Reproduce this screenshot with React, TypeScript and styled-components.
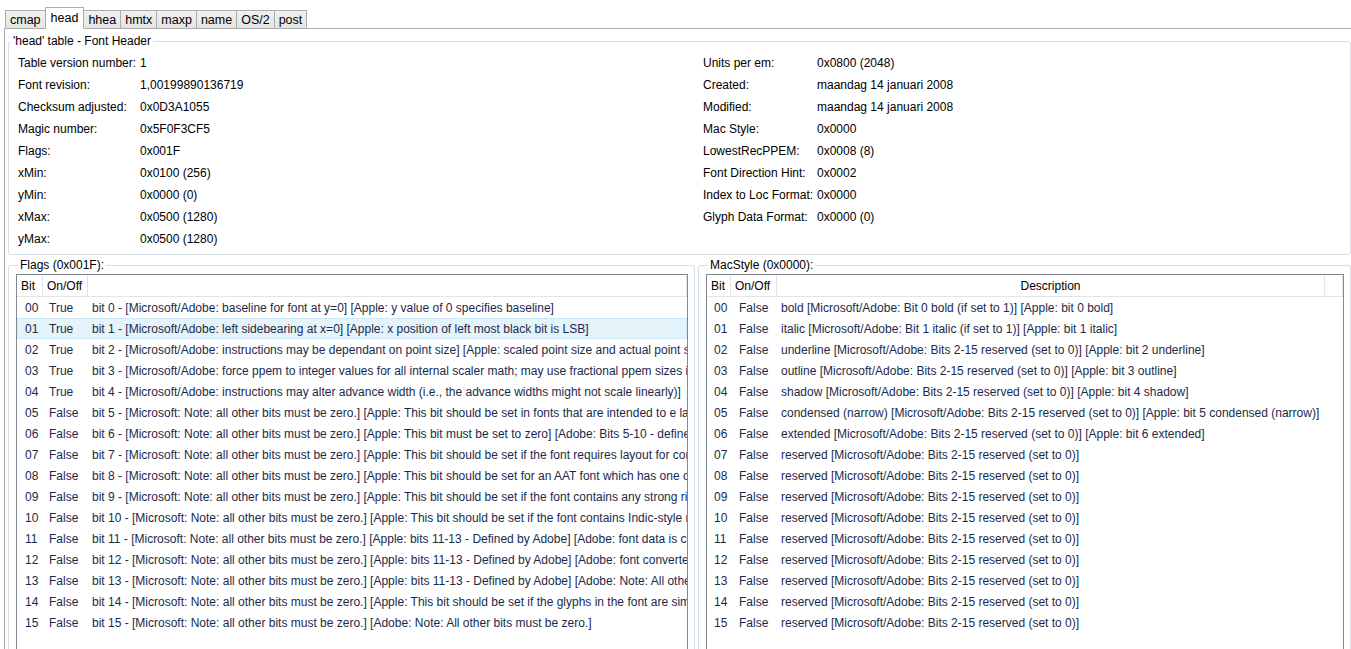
import styled, { createGlobalStyle } from 'styled-components';

const Global = createGlobalStyle`
  html, body { margin: 0; background: #fff; overflow: hidden; }
  body { font-family: "Liberation Sans", "Noto Sans", sans-serif; font-size: 12px; color: #000; }
`;

const Page = styled.div`
  width: 1351px;
  height: 649px;
  padding: 6px 0 0 4px;
  box-sizing: border-box;
  display: flex;
  flex-direction: column;
`;

const TabRow = styled.div`
  display: flex;
  align-items: flex-end;
  height: 22px;
  padding-left: 2px;
`;

const Tab = styled.div<{ $active?: boolean }>`
  height: ${p => (p.$active ? '22px' : '19px')};
  padding: 0 ${p => (p.$active ? 5 : 4)}px;
  display: flex;
  align-items: center;
  border: 1px solid #acacac;
  border-bottom: ${p => (p.$active ? '1px solid #fff' : '1px solid #acacac')};
  margin-left: -1px;
  background: ${p => (p.$active ? '#fff' : 'linear-gradient(#f0f0f0, #e5e5e5)')};
  position: relative;
  z-index: ${p => (p.$active ? 1 : 0)};
  margin-bottom: -1px;
  box-sizing: border-box;
  font-size: 12.5px;
`;

const Panel = styled.div`
  flex: 1;
  border-top: 1px solid #acacac;
  border-left: 1px solid #acacac;
  padding: 5px 0 0 3px;
  display: flex;
  flex-direction: column;
  gap: 3px;
  min-height: 0;
`;

const Group = styled.fieldset`
  margin: 0;
  border: 1px solid #d5dfe5;
  border-radius: 3px;
  padding: 4px 0 0 0;
  min-width: 0;
  box-sizing: border-box;
`;

const Legend = styled.legend`
  padding: 0 2px;
  margin-left: 2px;
  font-size: 12px;
`;

const HeaderGrid = styled.div`
  display: grid;
  grid-template-columns: 685px 1fr;
  padding: 0 0 4px 9px;
`;

const FieldCol = styled.div`
  display: flex;
  flex-direction: column;
`;

const Field = styled.div<{ $lw: number }>`
  display: flex;
  height: 22px;
  align-items: center;
  white-space: nowrap;
  & > span:first-child { width: ${p => p.$lw}px; flex: none; }
`;

const Bottom = styled.div`
  flex: 1;
  display: grid;
  grid-template-columns: 687px 1fr;
  gap: 3px;
  min-height: 0;
`;

const ListGroup = styled(Group)`
  border-bottom: none;
  border-radius: 3px 3px 0 0;
  padding: 0 6px 0 7px;
  display: flex;
  flex-direction: column;
  overflow: hidden;
`;

const List = styled.div`
  flex: 1;
  border: 1px solid #828790;
  border-bottom: none;
  margin-top: 2px;
  overflow: hidden;
  color: #1b2a4a;
`;

const HeadRow = styled.div`
  display: flex;
  height: 21px;
  border-bottom: 1px solid #e5e5e5;
  color: #000;
`;

const HeadCell = styled.div<{ $w?: number; $center?: boolean; $grow?: boolean }>`
  width: ${p => (p.$w ? `${p.$w}px` : 'auto')};
  flex: ${p => (p.$grow ? 1 : 'none')};
  border-right: 1px solid #e5e5e5;
  display: flex;
  align-items: center;
  justify-content: ${p => (p.$center ? 'center' : 'flex-start')};
  padding-left: ${p => (p.$center ? 0 : 4)}px;
  box-sizing: border-box;
`;

const Row = styled.div<{ $sel?: boolean }>`
  display: flex;
  height: 21px;
  align-items: center;
  white-space: nowrap;
  background: ${p => (p.$sel ? '#e5f3fb' : 'transparent')};
  box-shadow: ${p => (p.$sel ? 'inset 0 0 0 1px #cde8f9' : 'none')};
`;

const Cell = styled.div<{ $w: number; $pl: number }>`
  width: ${p => p.$w}px;
  flex: none;
  padding-left: ${p => p.$pl}px;
  box-sizing: border-box;
`;

const DescCell = styled.div`
  flex: 1;
  padding-left: 4px;
  overflow: hidden;
`;

const leftFields = [
  ['Table version number:', '1'],
  ['Font revision:', '1,00199890136719'],
  ['Checksum adjusted:', '0x0D3A1055'],
  ['Magic number:', '0x5F0F3CF5'],
  ['Flags:', '0x001F'],
  ['xMin:', '0x0100 (256)'],
  ['yMin:', '0x0000 (0)'],
  ['xMax:', '0x0500 (1280)'],
  ['yMax:', '0x0500 (1280)'],
];

const rightFields = [
  ['Units per em:', '0x0800 (2048)'],
  ['Created:', 'maandag 14 januari 2008'],
  ['Modified:', 'maandag 14 januari 2008'],
  ['Mac Style:', '0x0000'],
  ['LowestRecPPEM:', '0x0008 (8)'],
  ['Font Direction Hint:', '0x0002'],
  ['Index to Loc Format:', '0x0000'],
  ['Glyph Data Format:', '0x0000 (0)'],
];

const note = '[Microsoft: Note: all other bits must be zero.]';
const flags = [
  'bit 0 - [Microsoft/Adobe: baseline for font at y=0] [Apple: y value of 0 specifies baseline]',
  'bit 1 - [Microsoft/Adobe: left sidebearing at x=0] [Apple: x position of left most black bit is LSB]',
  'bit 2 - [Microsoft/Adobe: instructions may be dependant on point size] [Apple: scaled point size and actual point size will differ]',
  'bit 3 - [Microsoft/Adobe: force ppem to integer values for all internal scaler math; may use fractional ppem sizes if this bit is clear]',
  'bit 4 - [Microsoft/Adobe: instructions may alter advance width (i.e., the advance widths might not scale linearly)]',
  `bit 5 - ${note} [Apple: This bit should be set in fonts that are intended to e laid out vertically]`,
  `bit 6 - ${note} [Apple: This bit must be set to zero] [Adobe: Bits 5-10 - defined by Apple]`,
  `bit 7 - ${note} [Apple: This bit should be set if the font requires layout for correct linguistic rendering]`,
  `bit 8 - ${note} [Apple: This bit should be set for an AAT font which has one or more metamorphosis effects]`,
  `bit 9 - ${note} [Apple: This bit should be set if the font contains any strong right-to-left glyphs]`,
  `bit 10 - ${note} [Apple: This bit should be set if the font contains Indic-style rearrangement effects]`,
  `bit 11 - ${note} [Apple: bits 11-13 - Defined by Adobe] [Adobe: font data is compressed]`,
  `bit 12 - ${note} [Apple: bits 11-13 - Defined by Adobe] [Adobe: font converted]`,
  `bit 13 - ${note} [Apple: bits 11-13 - Defined by Adobe] [Adobe: Note: All other bits must be zero.]`,
  `bit 14 - ${note} [Apple: This bit should be set if the glyphs in the font are simply generic symbols]`,
  `bit 15 - ${note} [Adobe: Note: All other bits must be zero.]`,
];

const rsv = 'reserved [Microsoft/Adobe: Bits 2-15  reserved (set to 0)]';
const mac = [
  'bold [Microsoft/Adobe: Bit 0 bold (if set to 1)] [Apple: bit 0 bold]',
  'italic [Microsoft/Adobe: Bit 1 italic (if set to 1)] [Apple: bit 1 italic]',
  'underline [Microsoft/Adobe: Bits 2-15  reserved (set to 0)] [Apple: bit 2 underline]',
  'outline [Microsoft/Adobe: Bits 2-15  reserved (set to 0)] [Apple: bit 3 outline]',
  'shadow [Microsoft/Adobe: Bits 2-15  reserved (set to 0)] [Apple: bit 4 shadow]',
  'condensed (narrow) [Microsoft/Adobe: Bits 2-15  reserved (set to 0)] [Apple: bit 5 condensed (narrow)]',
  'extended [Microsoft/Adobe: Bits 2-15  reserved (set to 0)] [Apple: bit 6 extended]',
  ...Array(9).fill(rsv),
];

const pad = (i: number) => String(i).padStart(2, '0');
const tabs = ['cmap', 'head', 'hhea', 'hmtx', 'maxp', 'name', 'OS/2', 'post'];

export default function App() {
  return (
    <Page>
      <Global />
      <TabRow>
        {tabs.map(t => (
          <Tab key={t} $active={t === 'head'}>{t}</Tab>
        ))}
      </TabRow>
      <Panel>
        <Group>
          <Legend>'head' table - Font Header</Legend>
          <HeaderGrid>
            <FieldCol>
              {leftFields.map(([l, v]) => (
                <Field key={l} $lw={122}><span>{l}</span><span>{v}</span></Field>
              ))}
            </FieldCol>
            <FieldCol>
              {rightFields.map(([l, v]) => (
                <Field key={l} $lw={114}><span>{l}</span><span>{v}</span></Field>
              ))}
            </FieldCol>
          </HeaderGrid>
        </Group>
        <Bottom>
          <ListGroup>
            <Legend>Flags (0x001F):</Legend>
            <List>
              <HeadRow>
                <HeadCell $w={26}>Bit</HeadCell>
                <HeadCell $w={45}>On/Off</HeadCell>
                <HeadCell $grow />
              </HeadRow>
              {flags.map((d, i) => (
                <Row key={i} $sel={i === 1}>
                  <Cell $w={26} $pl={8}>{pad(i)}</Cell>
                  <Cell $w={45} $pl={6}>{i < 5 ? 'True' : 'False'}</Cell>
                  <DescCell>{d}</DescCell>
                </Row>
              ))}
            </List>
          </ListGroup>
          <ListGroup>
            <Legend>MacStyle (0x0000):</Legend>
            <List>
              <HeadRow>
                <HeadCell $w={24}>Bit</HeadCell>
                <HeadCell $w={46}>On/Off</HeadCell>
                <HeadCell $w={548} $center>Description</HeadCell>
                <HeadCell $grow />
              </HeadRow>
              {mac.map((d, i) => (
                <Row key={i}>
                  <Cell $w={24} $pl={7}>{pad(i)}</Cell>
                  <Cell $w={46} $pl={8}>False</Cell>
                  <DescCell>{d}</DescCell>
                </Row>
              ))}
            </List>
          </ListGroup>
        </Bottom>
      </Panel>
    </Page>
  );
}
